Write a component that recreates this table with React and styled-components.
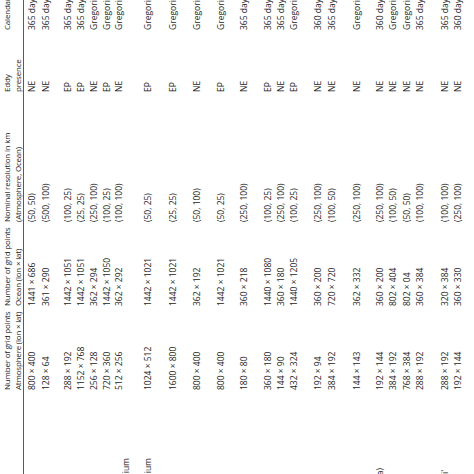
import React from "react";
import styled, { createGlobalStyle } from "styled-components";

const GlobalStyle = createGlobalStyle`
  html, body {
    margin: 0;
    padding: 0;
    background: #ffffff;
  }
  body {
    font-family: "Open Sans", "Noto Sans", sans-serif;
    color: #222;
  }
`;

const ROW_H = 13;
const COLS = "90px 84px 84px 130px 62px 120px";

// the page is a table printed sideways: the sheet is laid out upright and turned
const Frame = styled.div`
  width: 474px;
  height: 474px;
  overflow: hidden;
  background: #fff;
`;

const Sheet = styled.div`
  width: 570px;
  height: 474px;
  transform-origin: 0 0;
  transform: translateY(474px) rotate(-90deg) translateX(-6px);
  display: flex;
  flex-direction: column;
  font-size: 8.5px;
`;

const HeadRow = styled.div`
  display: grid;
  grid-template-columns: ${COLS};
  padding-top: 1px;
  height: 23px;
  box-sizing: border-box;
`;

const HeadCell = styled.div`
  font-size: 8px;
  line-height: 11px;
  white-space: nowrap;
  letter-spacing: -0.2px;
`;

const Rule = styled.div`
  height: 1px;
  background: #5a5a5a;
  margin-bottom: 1px;
`;

const Row = styled.div`
  display: grid;
  grid-template-columns: ${COLS};
  height: ${ROW_H}px;
  line-height: ${ROW_H}px;
  margin-top: ${(p) => p.$gap}px;
  white-space: nowrap;
`;

const Cell = styled.div``;

// model names sit mostly outside the crop, so they are pinned to the right end
const Label = styled.div`
  display: flex;
  justify-content: flex-end;
  padding-right: ${(p) => p.$pad || 68}px;
  min-width: 0;
`;

const rows = [
  { c: 32, v: ["800 × 400", "1441 × 686", "(50, 50)", "NE", "365 day"] },
  { c: 46, v: ["128 × 64", "361 × 290", "(500, 100)", "NE", "365 day"] },
  { c: 68, v: ["288 × 192", "1442 × 1051", "(100, 25)", "EP", "365 day"] },
  { c: 81, v: ["1152 × 768", "1442 × 1051", "(25, 25)", "EP", "365 day"] },
  { c: 94, v: ["256 × 128", "362 × 294", "(250, 100)", "NE", "Gregorian"] },
  { c: 107, v: ["720 × 360", "1442 × 1050", "(100, 25)", "EP", "Gregorian"] },
  { c: 119, v: ["512 × 256", "362 × 292", "(100, 100)", "NE", "Gregorian"] },
  { c: 126, label: "medium", v: ["", "", "", "", ""] },
  { c: 148, label: "medium", v: ["1024 × 512", "1442 × 1021", "(50, 25)", "EP", "Gregorian"] },
  { c: 173, v: ["1600 × 800", "1442 × 1021", "(25, 25)", "EP", "Gregorian"] },
  { c: 197, v: ["800 × 400", "362 × 192", "(50, 100)", "NE", "Gregorian"] },
  { c: 221, v: ["800 × 400", "1442 × 1021", "(50, 25)", "EP", "Gregorian"] },
  { c: 244, v: ["180 × 80", "360 × 218", "(250, 100)", "NE", "365 day"] },
  { c: 268, v: ["360 × 180", "1440 × 1080", "(100, 25)", "EP", "365 day"] },
  { c: 281, v: ["144 × 90", "360 × 180", "(250, 100)", "NE", "365 day"] },
  { c: 294, v: ["432 × 324", "1440 × 1205", "(100, 25)", "EP", "Gregorian"] },
  { c: 318, v: ["192 × 94", "360 × 200", "(250, 100)", "NE", "360 day"] },
  { c: 332, v: ["384 × 192", "720 × 720", "(100, 50)", "NE", "365 day"] },
  { c: 357, v: ["144 × 143", "362 × 332", "(250, 100)", "NE", "Gregorian"] },
  { c: 380, label: "(a)", pad: 78, v: ["192 × 144", "360 × 200", "(250, 100)", "NE", "360 day"] },
  { c: 393, v: ["384 × 192", "802 × 404", "(100, 50)", "NE", "Gregorian"] },
  { c: 407, v: ["768 × 384", "802 × 04", "(50, 50)", "NE", "Gregorian"] },
  { c: 420, v: ["288 × 192", "360 × 384", "(100, 100)", "NE", "365 day"] },
  { c: 445, label: "i'", pad: 80, v: ["288 × 192", "320 × 384", "(100, 100)", "NE", "365 day"] },
  { c: 458, v: ["192 × 144", "360 × 330", "(250, 100)", "NE", "360 day"] },
];

const headers = [
  ["Number of grid points", "Atmosphere (lon × lat)"],
  ["Number of grid points", "Ocean (lon × lat)"],
  ["Nominal resolution in km", "(Atmosphere, Ocean)"],
  ["Eddy", "presence"],
  ["Calendar", ""],
];

export default function App() {
  let prev = 25 - ROW_H / 2;
  return (
    <Frame>
      <GlobalStyle />
      <Sheet>
        <HeadRow>
          <Label />
          {headers.map(([a, b], i) => (
            <HeadCell key={i}>
              {a}
              <br />
              {b}
            </HeadCell>
          ))}
        </HeadRow>
        <Rule />
        {rows.map((r, i) => {
          const gap = r.c - prev - ROW_H;
          prev = r.c;
          return (
            <Row key={i} $gap={i === 0 ? 0 : gap}>
              <Label $pad={r.pad}>
                <span>{r.label || ""}</span>
              </Label>
              {r.v.map((t, j) => (
                <Cell key={j}>{t}</Cell>
              ))}
            </Row>
          );
        })}
      </Sheet>
    </Frame>
  );
}
